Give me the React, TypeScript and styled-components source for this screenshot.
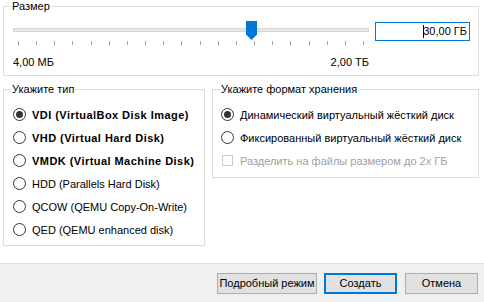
import React from 'react';
import styled, { createGlobalStyle } from 'styled-components';

const GlobalStyle = createGlobalStyle`
  html, body {
    margin: 0;
    padding: 0;
    background: #ffffff;
  }
  body {
    font-family: "Liberation Sans", Arial, sans-serif;
    font-size: 11px;
    color: #000000;
  }
`;

const Window = styled.div`
  width: 484px;
  height: 302px;
  display: flex;
  flex-direction: column;
  overflow: hidden;
`;

const Body = styled.div`
  height: 263px;
  flex: none;
  box-sizing: border-box;
  padding: 0 5px 0 3px;
  background: #ffffff;
  display: flex;
  flex-direction: column;
`;

// Рамка группы (group box) с подписью в линии рамки
const GroupBox = styled.fieldset<{ $width?: number; $grow?: boolean }>`
  margin: 0;
  padding: 0;
  min-width: 0;
  border: 1px solid #dcdcdc;
  box-sizing: border-box;
  flex: ${({ $grow }) => ($grow ? '1' : 'none')};
  ${({ $width }) => ($width ? `width: ${$width}px;` : '')}
`;

const Legend = styled.legend`
  margin-left: 7px;
  padding: 0 1px;
  font-size: 11px;
  line-height: 13px;
`;

const SizeContent = styled.div`
  display: flex;
  align-items: flex-start;
  padding: 0 7px 6px 9px;
`;

const SliderColumn = styled.div`
  position: relative;
  width: 356px;
`;

const Track = styled.div`
  margin-top: 15px;
  height: 4px;
  box-sizing: border-box;
  background: #e7e7e7;
  border: 1px solid #d6d6d6;
`;

const Ticks = styled.div`
  margin-top: 9px;
  padding: 0 5px;
  display: flex;
  justify-content: space-between;
`;

const Tick = styled.span`
  width: 1px;
  height: 4px;
  background: #a3a3a3;
`;

const SliderLabels = styled.div`
  margin-top: 11px;
  display: flex;
  justify-content: space-between;
  line-height: 13px;
`;

const Thumb = styled.svg`
  position: absolute;
  top: 8px;
  display: block;
`;

const SizeInput = styled.div`
  margin: 9px 0 0 6px;
  width: 95px;
  height: 19px;
  box-sizing: border-box;
  border: 1px solid #0078d7;
  display: flex;
  align-items: center;
  justify-content: flex-end;
  padding-right: 2px;
  line-height: 13px;
`;

const Caret = styled.span`
  width: 1px;
  height: 13px;
  background: #000000;
  margin-right: -1px;
`;

const GroupsRow = styled.div`
  margin-top: 7px;
  display: flex;
  align-items: flex-start;
  gap: 7px;
`;

const OptionList = styled.div<{ $left: number; $bottom: number }>`
  padding: 7px 0 ${({ $bottom }) => $bottom}px ${({ $left }) => $left}px;
  display: flex;
  flex-direction: column;
`;

const OptionRow = styled.div<{ $bold?: boolean; $disabled?: boolean }>`
  height: 23px;
  display: flex;
  align-items: center;
  gap: 6px;
  white-space: nowrap;
  font-weight: ${({ $bold }) => ($bold ? 700 : 400)};
  letter-spacing: ${({ $bold }) => ($bold ? '0.45px' : 'normal')};
  color: ${({ $disabled }) => ($disabled ? '#a0a0a0' : '#000000')};
`;

const Radio = styled.span<{ $checked?: boolean }>`
  position: relative;
  width: 13px;
  height: 13px;
  box-sizing: border-box;
  border-radius: 50%;
  border: 1px solid #333333;
  background: #ffffff;
  flex: none;
  &::after {
    content: '';
    display: ${({ $checked }) => ($checked ? 'block' : 'none')};
    position: absolute;
    left: 2px;
    top: 2px;
    width: 7px;
    height: 7px;
    border-radius: 50%;
    background: #333333;
  }
`;

const CheckBox = styled.span`
  width: 11px;
  height: 11px;
  margin: 0 1px;
  box-sizing: border-box;
  border: 1px solid #cccccc;
  background: #ffffff;
  flex: none;
`;

const Footer = styled.div`
  flex: 1;
  background: #f0f0f0;
  border-top: 1px solid #dfdfdf;
  display: flex;
  justify-content: flex-end;
  align-items: flex-start;
  padding: 9px 6px 0 0;
`;

const Button = styled.button<{ $width: number; $default?: boolean; $gap: number }>`
  width: ${({ $width }) => $width}px;
  height: 21px;
  margin-left: ${({ $gap }) => $gap}px;
  padding: 0;
  box-sizing: border-box;
  background: #e1e1e1;
  border: ${({ $default }) => ($default ? '2px solid #0078d7' : '1px solid #adadad')};
  font-family: "Liberation Sans", Arial, sans-serif;
  font-size: 11px;
  color: #000000;
  line-height: 13px;
`;

const types = [
  { label: 'VDI (VirtualBox Disk Image)', bold: true, checked: true },
  { label: 'VHD (Virtual Hard Disk)', bold: true },
  { label: 'VMDK (Virtual Machine Disk)', bold: true },
  { label: 'HDD (Parallels Hard Disk)' },
  { label: 'QCOW (QEMU Copy-On-Write)' },
  { label: 'QED (QEMU enhanced disk)' },
];

const TICK_COUNT = 20;
const thumbLeft = 233;

export default function App() {
  return (
    <>
      <GlobalStyle />
      <Window>
        <Body>
          <GroupBox>
            <Legend>Размер</Legend>
            <SizeContent>
              <SliderColumn>
                <Track />
                <Ticks>
                  {Array.from({ length: TICK_COUNT }).map((_, i) => (
                    <Tick key={i} />
                  ))}
                </Ticks>
                <SliderLabels>
                  <span>4,00 МБ</span>
                  <span>2,00 ТБ</span>
                </SliderLabels>
                <Thumb width="11" height="19" viewBox="0 0 11 19" style={{ left: thumbLeft }}>
                  <path d="M0 0H11V13.5L5.5 19L0 13.5Z" fill="#0078d7" />
                </Thumb>
              </SliderColumn>
              <SizeInput>
                <Caret />
                <span>30,00 ГБ</span>
              </SizeInput>
            </SizeContent>
          </GroupBox>

          <GroupsRow>
            <GroupBox $width={202}>
              <Legend>Укажите тип</Legend>
              <OptionList $left={9} $bottom={4}>
                {types.map((t) => (
                  <OptionRow key={t.label} $bold={t.bold}>
                    <Radio $checked={t.checked} />
                    <span>{t.label}</span>
                  </OptionRow>
                ))}
              </OptionList>
            </GroupBox>

            <GroupBox $grow>
              <Legend>Укажите формат хранения</Legend>
              <OptionList $left={8} $bottom={5}>
                <OptionRow>
                  <Radio $checked />
                  <span>Динамический виртуальный жёсткий диск</span>
                </OptionRow>
                <OptionRow>
                  <Radio />
                  <span>Фиксированный виртуальный жёсткий диск</span>
                </OptionRow>
                <OptionRow $disabled>
                  <CheckBox />
                  <span>Разделить на файлы размером до 2x ГБ</span>
                </OptionRow>
              </OptionList>
            </GroupBox>
          </GroupsRow>
        </Body>

        <Footer>
          <Button $width={100} $gap={0}>Подробный режим</Button>
          <Button $width={73} $gap={7} $default>Создать</Button>
          <Button $width={73} $gap={8}>Отмена</Button>
        </Footer>
      </Window>
    </>
  );
}
